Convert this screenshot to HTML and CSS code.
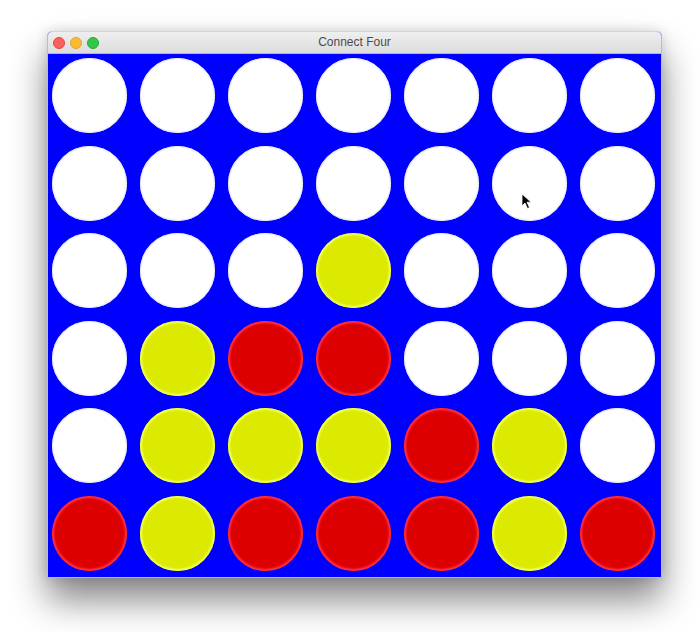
FILE: index.html
```html
<!DOCTYPE html>
<html>
<head>
<meta charset="utf-8">
<title>Connect Four</title>
<link rel="stylesheet" href="styles.css">
</head>
<body>
<div class="window">
  <div class="titlebar">
    <div class="lights">
      <span class="light red"></span>
      <span class="light yellow"></span>
      <span class="light green"></span>
    </div>
    <div class="title">Connect Four</div>
  </div>
  <div class="board">
    <div class="disc w"></div><div class="disc w"></div><div class="disc w"></div><div class="disc w"></div><div class="disc w"></div><div class="disc w"></div><div class="disc w"></div>
    <div class="disc w"></div><div class="disc w"></div><div class="disc w"></div><div class="disc w"></div><div class="disc w"></div><div class="disc w cursor-host"><svg class="cursor" width="12" height="17" viewBox="0 0 12 17"><path d="M1 1 L1 13 L4 10 L6.5 15.5 L8.5 14.6 L6 9.2 L10.2 9.2 Z" fill="#000" stroke="#fff" stroke-width="0.8"/></svg></div><div class="disc w"></div>
    <div class="disc w"></div><div class="disc w"></div><div class="disc w"></div><div class="disc y"></div><div class="disc w"></div><div class="disc w"></div><div class="disc w"></div>
    <div class="disc w"></div><div class="disc y"></div><div class="disc r"></div><div class="disc r"></div><div class="disc w"></div><div class="disc w"></div><div class="disc w"></div>
    <div class="disc w"></div><div class="disc y"></div><div class="disc y"></div><div class="disc y"></div><div class="disc r"></div><div class="disc y"></div><div class="disc w"></div>
    <div class="disc r"></div><div class="disc y"></div><div class="disc r"></div><div class="disc r"></div><div class="disc r"></div><div class="disc y"></div><div class="disc r"></div>
  </div>
</div>
</body>
</html>
```
FILE: styles.css
```css
html, body {
  margin: 0;
  padding: 0;
  background: #ffffff;
}
body {
  width: 700px;
  height: 632px;
  overflow: hidden;
  font-family: "Liberation Sans", Arial, sans-serif;
}
.window {
  margin: 31px 0 0 47px;
  width: 615px;
  border: 1px solid #bcbcbc;
  border-top-color: #d4d4d4;
  border-radius: 5px 5px 2px 2px;
  box-sizing: border-box;
  background: #0000ff;
  box-shadow: 0 22px 36px rgba(0, 0, 0, 0.48), 0 0 12px rgba(0, 0, 0, 0.14);
  overflow: hidden;
}
.titlebar {
  height: 22px;
  box-sizing: border-box;
  background: linear-gradient(#efefef, #dcdcdc);
  border-bottom: 1px solid #b6b6b6;
  display: flex;
  align-items: center;
  position: relative;
}
.lights {
  display: flex;
  gap: 5px;
  padding-left: 5px;
}
.light {
  width: 12px;
  height: 12px;
  border-radius: 50%;
  box-sizing: border-box;
}
.light.red { background: #fc5f57; border: 1px solid #df4744; }
.light.yellow { background: #fdbc2e; border: 1px solid #dea236; }
.light.green { background: #33c748; border: 1px solid #27aa35; }
.title {
  position: absolute;
  left: 0;
  right: 0;
  top: 0;
  line-height: 21px;
  text-align: center;
  font-family: "Liberation Sans", Arial, sans-serif;
  font-size: 12px;
  color: #4c4c4c;
}
.board {
  height: 523px;
  box-sizing: border-box;
  background: #0000ff;
  padding: 4px 6px 6px 4px;
  display: grid;
  grid-template-columns: repeat(7, 75px);
  grid-template-rows: repeat(6, 75px);
  column-gap: 13px;
  row-gap: 12.6px;
}
.disc {
  width: 75px;
  height: 75px;
  border-radius: 50%;
  box-sizing: border-box;
}
.disc.w {
  background: #ffffff;
  box-shadow: inset 0 0 1px 1px #e4e4f4;
}
.disc.r {
  background: #dc0000;
  box-shadow: inset 0 0 2px 2px #ff3048;
}
.disc.y {
  background: #dce900;
  box-shadow: inset 0 0 2px 2px #f0ff58;
}
.cursor-host {
  position: relative;
}
.cursor {
  position: absolute;
  left: 29px;
  top: 47px;
}
```
